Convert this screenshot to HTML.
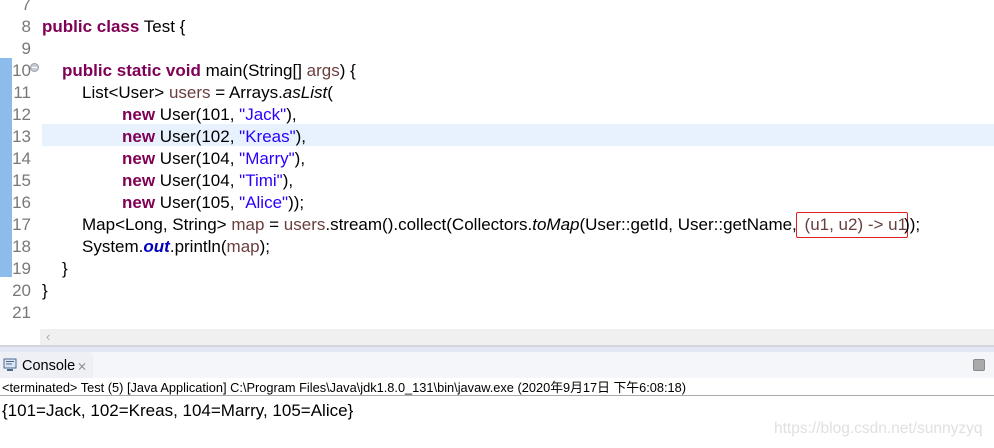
<!DOCTYPE html>
<html><head><meta charset="utf-8"><style>
*{margin:0;padding:0;box-sizing:border-box}
body{width:994px;height:448px;overflow:hidden;background:#fff;font-family:"Liberation Sans","Noto Sans CJK SC",sans-serif;position:relative;color:#000}
.bar{position:absolute;left:0;top:58px;width:12px;height:219px;background:#8dbcec}
.gut{position:absolute;left:12px;top:0;width:28px;height:329px;background:#fff}
.ln{position:absolute;left:0;width:31px;text-align:right;font-size:17px;color:#787878;line-height:22px}
.code{position:absolute;left:42px;font-size:17px;line-height:22px;white-space:pre}
.hl{position:absolute;left:42px;top:124px;width:952px;height:22px;background:#e8f2fe}
.k{color:#7f0055;font-weight:bold}
.s{color:#2a00ff}
.v{color:#6a3e3e}
.i{font-style:italic}
.f{color:#0000c0;font-weight:bold;font-style:italic}
.fold{position:absolute;left:30px;top:63px;width:9px;height:9px;border-radius:50%;background:#c8ccd4;border:1px solid #9aa0aa}
.fold:after{content:"";position:absolute;left:1px;top:3px;width:5px;height:1px;background:#fff}
.box{display:inline-block;border:1px solid #e02020;border-radius:2px;padding:0 0 0 3px;margin-left:-1px;margin-right:-4px;line-height:24px;margin-top:-2px;vertical-align:top}
</style></head><body>
<div class="gut"></div>
<div class="bar"></div>
<div class="hl"></div>
<div class="fold"></div>
<div class="ln" style="top:-6px">7</div>
<div class="ln" style="top:16px">8</div>
<div class="ln" style="top:38px">9</div>
<div class="ln" style="top:60px">10</div>
<div class="ln" style="top:82px">11</div>
<div class="ln" style="top:104px">12</div>
<div class="ln" style="top:126px">13</div>
<div class="ln" style="top:148px">14</div>
<div class="ln" style="top:170px">15</div>
<div class="ln" style="top:192px">16</div>
<div class="ln" style="top:214px">17</div>
<div class="ln" style="top:236px">18</div>
<div class="ln" style="top:258px">19</div>
<div class="ln" style="top:280px">20</div>
<div class="ln" style="top:302px">21</div>
<div class="code" style="top:16px"><span class="k">public class</span> Test {</div>
<div class="code" style="top:60px;left:62px"><span class="k">public static void</span> main(String[] <span class="v">args</span>) {</div>
<div class="code" style="top:82px;left:82px">List&lt;User&gt; <span class="v">users</span> = Arrays.<span class="i">asList</span>(</div>
<div class="code" style="top:104px;left:122px"><span class="k">new</span> User(101, <span class="s">"Jack"</span>),</div>
<div class="code" style="top:126px;left:122px"><span class="k">new</span> User(102, <span class="s">"Kreas"</span>),</div>
<div class="code" style="top:148px;left:122px"><span class="k">new</span> User(104, <span class="s">"Marry"</span>),</div>
<div class="code" style="top:170px;left:122px"><span class="k">new</span> User(104, <span class="s">"Timi"</span>),</div>
<div class="code" style="top:192px;left:122px"><span class="k">new</span> User(105, <span class="s">"Alice"</span>));</div>
<div class="code" style="top:214px;left:82px">Map&lt;Long, String&gt; <span class="v">map</span> = <span class="v">users</span>.stream().collect(Collectors.<span class="i">toMap</span>(User::getId, User::getName,<span class="box"> <span class="v">(u1, u2) -&gt; u1</span></span>));</div>
<div class="code" style="top:236px;left:82px">System.<span class="f">out</span>.println(<span class="v">map</span>);</div>
<div class="code" style="top:258px;left:62px">}</div>
<div class="code" style="top:280px">}</div>
<div style="position:absolute;left:40px;top:329px;width:954px;height:16px;background:#f0f0f0"></div>
<div style="position:absolute;left:46px;top:329px;font-size:13px;color:#aaa;line-height:16px">&lsaquo;</div>
<div style="position:absolute;left:0;top:345px;width:994px;height:2px;background:#d4d4dc"></div>
<div style="position:absolute;left:0;top:347px;width:994px;height:5px;background:#e4e8f6"></div>
<div style="position:absolute;left:0;top:352px;width:994px;height:26px;background:#f5f6fa"></div>
<div style="position:absolute;left:0;top:352px;width:93px;height:26px;background:#eef0f6;border-top-right-radius:5px"></div>
<svg style="position:absolute;left:3px;top:358px" width="14" height="14" viewBox="0 0 14 14"><rect x="1" y="1" width="12" height="9" fill="#dce6f2" stroke="#4a6a90"/><rect x="3" y="3" width="8" height="1" fill="#4a6a90"/><rect x="3" y="5.5" width="6" height="1" fill="#4a6a90"/><rect x="4" y="11" width="6" height="2" fill="#4a6a90"/></svg>
<div style="position:absolute;left:22px;top:356px;font-size:14.5px;line-height:20px">Console</div>
<div style="position:absolute;left:77px;top:356px;font-size:12px;line-height:20px;color:#888">&#x2A2F;</div>
<div style="position:absolute;left:973px;top:359px;width:12px;height:12px;background:#aaa;border:1px solid #888;border-radius:2px"></div>
<div style="position:absolute;left:0;top:378px;width:994px;height:18px;background:#fff;border-bottom:1px solid #aaa"></div>
<div style="position:absolute;left:2px;top:379px;font-size:12.8px;line-height:17px;white-space:pre">&lt;terminated&gt; Test (5) [Java Application] C:\Program Files\Java\jdk1.8.0_131\bin\javaw.exe (2020年9月17日 下午6:08:18)</div>
<div style="position:absolute;left:2px;top:400px;font-size:17px;line-height:22px;white-space:pre">{101=Jack, 102=Kreas, 104=Marry, 105=Alice}</div>
<div style="position:absolute;left:774px;top:419px;font-size:15.5px;line-height:20px;color:#e0e0e0">https://blog.csdn.net/sunnyzyq</div>
</body></html>
